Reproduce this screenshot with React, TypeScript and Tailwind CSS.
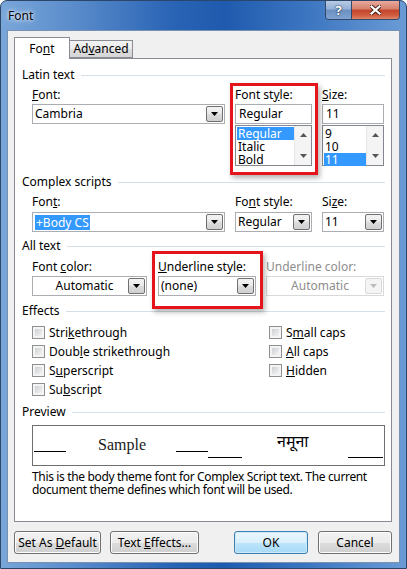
import React from "react";

const ui = "font-['Noto_Sans',sans-serif]";

function Down({ c = "#000000" }: { c?: string }) {
  return (
    <svg width="7" height="4" viewBox="0 0 7 4">
      <path d="M0 0H7L3.5 4Z" fill={c} />
    </svg>
  );
}

function Up({ c = "#000000" }: { c?: string }) {
  return (
    <svg width="7" height="4" viewBox="0 0 7 4">
      <path d="M0 4H7L3.5 0Z" fill={c} />
    </svg>
  );
}

function Group({ title }: { title: string }) {
  return (
    <div className="flex items-center h-[16px] pl-[7px] pr-[6px]">
      <span>{title}</span>
      <div className="flex-1 h-px bg-[#d5dfe5] ml-[6px]" />
    </div>
  );
}

function Combo({
  value,
  w,
  center,
  selected,
  disabled,
}: {
  value: string;
  w: string;
  center?: boolean;
  selected?: boolean;
  disabled?: boolean;
}) {
  return (
    <div className={`${w} h-[20px] flex border bg-white ${disabled ? "border-[#d9d9d9]" : "border-[#abadb3]"}`}>
      <div className={`flex-1 flex items-center ${center ? "justify-center pl-[8px]" : "pl-[2px]"} ${disabled ? "text-[#8d8d8d]" : ""}`}>
        <span className={selected ? "bg-[#3399ff] text-white px-[1px] leading-[15px]" : ""}>{value}</span>
      </div>
      <div
        className={`w-[17px] my-[1px] mr-[1px] flex items-center justify-center border rounded-[2px] ${
          disabled ? "border-[#dadada] bg-[#f4f4f4]" : "border-[#707070] bg-[linear-gradient(#f3f3f3,#ebebeb_45%,#dddddd_50%,#cfcfcf)]"
        }`}
      >
        <Down c={disabled ? "#bcbcbc" : "#000000"} />
      </div>
    </div>
  );
}

function TextBox({ value, w }: { value: string; w: string }) {
  return (
    <div className={`${w} h-[20px] flex items-center pl-[3px] border border-[#abadb3] bg-white`}>{value}</div>
  );
}

function ListBox({ items, sel, w }: { items: string[]; sel: string; w: string }) {
  return (
    <div className={`${w} h-[41px] flex border border-[#828790] bg-white`}>
      <div className="flex-1 pt-[1px] pl-[1px]">
        {items.map((it) => (
          <div
            key={it}
            className={`h-[13px] leading-[13px] pl-[1px] ${it === sel ? "bg-[#3399ff] text-white" : ""}`}
          >
            {it}
          </div>
        ))}
      </div>
      <div className="w-[17px] flex flex-col justify-between items-center py-[7px] bg-[#f4f4f4] border-l border-[#e6e6e6]">
        <Up c="#555555" />
        <Down c="#555555" />
      </div>
    </div>
  );
}

function Check({ label }: { label: React.ReactNode }) {
  return (
    <div className="flex items-center h-[19px]">
      <div className="w-[13px] h-[13px] border border-[#8e8f8f] bg-[#f4f4f4] p-[2px]">
        <div className="w-full h-full bg-[linear-gradient(135deg,#cdd0d4,#f3f3f3)]" />
      </div>
      <span className="ml-[4px]">{label}</span>
    </div>
  );
}

function Button({ children, w, def }: { children: React.ReactNode; w: string; def?: boolean }) {
  return (
    <div
      className={`${w} h-[23px] flex items-center justify-center rounded-[3px] border ${
        def
          ? "border-[#3c7fb1] bg-[linear-gradient(#eaf6fd,#d9f0fc_50%,#bee6fd_50%,#a7d9f5)] shadow-[inset_0_0_0_1px_#cde9f9]"
          : "border-[#707070] bg-[linear-gradient(#f2f2f2,#ebebeb_50%,#dddddd_50%,#cfcfcf)] shadow-[inset_0_0_0_1px_#fcfcfc]"
      }`}
    >
      {children}
    </div>
  );
}

export default function App() {
  return (
    <div className={`${ui} text-[12px] leading-[16px] text-black w-[407px] h-[569px]`}>
      <div className="w-[407px] h-[569px] flex flex-col px-[6px] pb-[5px] rounded-t-[7px] border border-[#2b4668] bg-[linear-gradient(90deg,#79a6d9,#5a8ccb_18%,#2a64b5_42%,#1f5aae_55%,#3b75c0_75%,#6a9bd5_100%)]">
        {/* title bar */}
        <div className="h-[29px] flex justify-between items-start">
          <span className="ml-[1px] mt-[7px] leading-[16px] [text-shadow:0_0_6px_#ffffff,0_0_3px_#ffffff]">Font</span>
          <div className="flex h-[19px] rounded-b-[4px] border border-t-0 border-[#34496a] overflow-hidden">
            <div className="w-[26px] h-full flex items-center justify-center border-r border-[#34496a] bg-[linear-gradient(#b7cbe4,#93b0d6_45%,#6a8fc0_50%,#7fa3d2)]">
              <span className="text-white font-bold text-[13px] leading-none [text-shadow:0_0_2px_#1d2f4a,0_0_1px_#1d2f4a]">?</span>
            </div>
            <div className="w-[47px] h-full flex items-center justify-center bg-[linear-gradient(#e9a99c,#d7806d_45%,#c4442c_50%,#d05c3f_80%,#e0876a)]">
              <svg width="11" height="10" viewBox="0 0 11 10">
                <path d="M1.5 1.5L9.5 8.5M9.5 1.5L1.5 8.5" stroke="#3a1a14" strokeWidth="4" strokeLinecap="square" />
                <path d="M1.5 1.5L9.5 8.5M9.5 1.5L1.5 8.5" stroke="#ffffff" strokeWidth="2.2" strokeLinecap="square" />
              </svg>
            </div>
          </div>
        </div>

        {/* client area */}
        <div className="flex-1 flex flex-col border border-[#7892b3] bg-[#f0f0f0]">
          {/* tabs */}
          <div className="flex items-end h-[27px] pt-[6px] pl-[6px]">
            <div className="relative z-10 w-[56px] h-[22px] -mb-[1px] flex items-center justify-center border border-b-0 border-[#898c95] bg-white">
              <span>
                Fo<u>n</u>t
              </span>
            </div>
            <div className="w-[63px] h-[18px] flex items-center justify-center border border-l-0 border-[#898c95] bg-[linear-gradient(#f3f3f3,#ebebeb_50%,#dddddd_50%,#d6d6d6)]">
              <span>
                Ad<u>v</u>anced
              </span>
            </div>
          </div>

          {/* panel */}
          <div className="relative ml-[6px] mr-[7px] h-[464px] border border-[#898c95] bg-white flex flex-col">
            <div className="mt-[8px]">
              <Group title="Latin text" />
            </div>
            <div className="pl-[17px] pr-[6px] mt-[4px] flex gap-[10px]">
              <div className="w-[193px]">
                <div className="h-[16px]">
                  <u>F</u>ont:
                </div>
                <div className="mt-[1px]">
                  <Combo value="Cambria" w="w-[193px]" />
                </div>
              </div>
              <div className="w-[77px]">
                <div className="h-[16px]">
                  Font st<u>y</u>le:
                </div>
                <div className="mt-[1px]">
                  <TextBox value="Regular" w="w-[77px]" />
                </div>
                <div className="mt-[1px]">
                  <ListBox items={["Regular", "Italic", "Bold"]} sel="Regular" w="w-[77px]" />
                </div>
              </div>
              <div className="w-[62px]">
                <div className="h-[16px]">
                  <u>S</u>ize:
                </div>
                <div className="mt-[1px]">
                  <TextBox value="11" w="w-[62px]" />
                </div>
                <div className="mt-[1px]">
                  <ListBox items={["9", "10", "11"]} sel="11" w="w-[62px]" />
                </div>
              </div>
            </div>

            <div className="mt-[8px]">
              <Group title="Complex scripts" />
            </div>
            <div className="pl-[17px] pr-[6px] mt-[4px] flex gap-[10px]">
              <div className="w-[193px]">
                <div className="h-[16px]">
                  Fon<u>t</u>:
                </div>
                <div className="mt-[2px]">
                  <Combo value="+Body CS" w="w-[193px]" selected />
                </div>
              </div>
              <div className="w-[77px]">
                <div className="h-[16px]">
                  Fo<u>n</u>t style:
                </div>
                <div className="mt-[2px]">
                  <Combo value="Regular" w="w-[77px]" />
                </div>
              </div>
              <div className="w-[62px]">
                <div className="h-[16px]">
                  Si<u>z</u>e:
                </div>
                <div className="mt-[2px]">
                  <Combo value="11" w="w-[62px]" />
                </div>
              </div>
            </div>

            <div className="mt-[6px]">
              <Group title="All text" />
            </div>
            <div className="pl-[17px] pr-[6px] mt-[5px] flex">
              <div className="w-[115px]">
                <div className="h-[16px]">
                  Font <u>c</u>olor:
                </div>
                <div className="mt-[1px]">
                  <Combo value="Automatic" w="w-[115px]" center />
                </div>
              </div>
              <div className="w-[98px] ml-[11px]">
                <div className="h-[16px]">
                  <u>U</u>nderline style:
                </div>
                <div className="mt-[1px]">
                  <Combo value="(none)" w="w-[98px]" />
                </div>
              </div>
              <div className="w-[118px] ml-[10px]">
                <div className="h-[16px] text-[#8d8d8d]">Underline color:</div>
                <div className="mt-[1px]">
                  <Combo value="Automatic" w="w-[118px]" center disabled />
                </div>
              </div>
            </div>

            <div className="mt-[7px]">
              <Group title="Effects" />
            </div>
            <div className="pl-[17px] pr-[6px] mt-[4px] flex">
              <div className="w-[237px] flex flex-col">
                <Check label={<>Stri<u>k</u>ethrough</>} />
                <Check label={<>Doub<u>l</u>e strikethrough</>} />
                <Check label={<>S<u>u</u>perscript</>} />
                <Check label={<>Su<u>b</u>script</>} />
              </div>
              <div className="flex flex-col">
                <Check label={<>S<u>m</u>all caps</>} />
                <Check label={<><u>A</u>ll caps</>} />
                <Check label={<><u>H</u>idden</>} />
              </div>
            </div>

            <div className="mt-[5px]">
              <Group title="Preview" />
            </div>
            <div className="pl-[17px] pr-[6px] mt-[5px]">
              <div className="h-[41px] flex items-start border border-[#6e6e6e] bg-white">
                <div className="w-[33px] shrink-0">
                  <div className="ml-[1px] mt-[25px] w-[32px] h-px bg-black" />
                </div>
                <div className="w-[110px] shrink-0 pl-[32px] mt-[9px] font-['Liberation_Serif',serif] text-[16px] leading-[20px] text-[#1a1a1a]">
                  Sample
                </div>
                <div className="w-[32px] shrink-0 mt-[25px] h-px bg-black" />
                <div className="w-[34px] shrink-0 mt-[31px] h-px bg-black" />
                <div className="w-[106px] shrink-0 pl-[35px] mt-[7px] font-['Noto_Sans_Devanagari','Lohit_Devanagari','FreeSerif','Noto_Sans',serif] text-[16px] leading-[22px]">
                  नमूना
                </div>
                <div className="w-[35px] shrink-0 mt-[31px] h-px bg-black" />
              </div>
            </div>
            <div className="pl-[17px] pr-[6px] mt-[4px] leading-[13px] whitespace-nowrap tracking-[-0.35px]">
              This is the body theme font for Complex Script text. The current
              <br />
              document theme defines which font will be used.
            </div>

            {/* highlight boxes drawn over the dialog */}
            <div className="absolute left-[215px] top-[24px] w-[88px] h-[92px] border-[3px] border-[#e5131b] shadow-[2px_3px_5px_rgba(0,0,0,0.3)]" />
            <div className="absolute left-[137px] top-[192px] w-[111px] h-[58px] border-[3px] border-[#e5131b] shadow-[2px_3px_5px_rgba(0,0,0,0.3)]" />
          </div>

          {/* buttons */}
          <div className="flex mt-[9px] ml-[6px]">
            <Button w="w-[87px]">
              <span>
                Set As <u>D</u>efault
              </span>
            </Button>
            <div className="ml-[9px]">
              <Button w="w-[89px]">
                <span>
                  Text <u>E</u>ffects...
                </span>
              </Button>
            </div>
            <div className="ml-[35px]">
              <Button w="w-[74px]" def>
                OK
              </Button>
            </div>
            <div className="ml-[10px]">
              <Button w="w-[74px]">Cancel</Button>
            </div>
          </div>
        </div>
      </div>
    </div>
  );
}
